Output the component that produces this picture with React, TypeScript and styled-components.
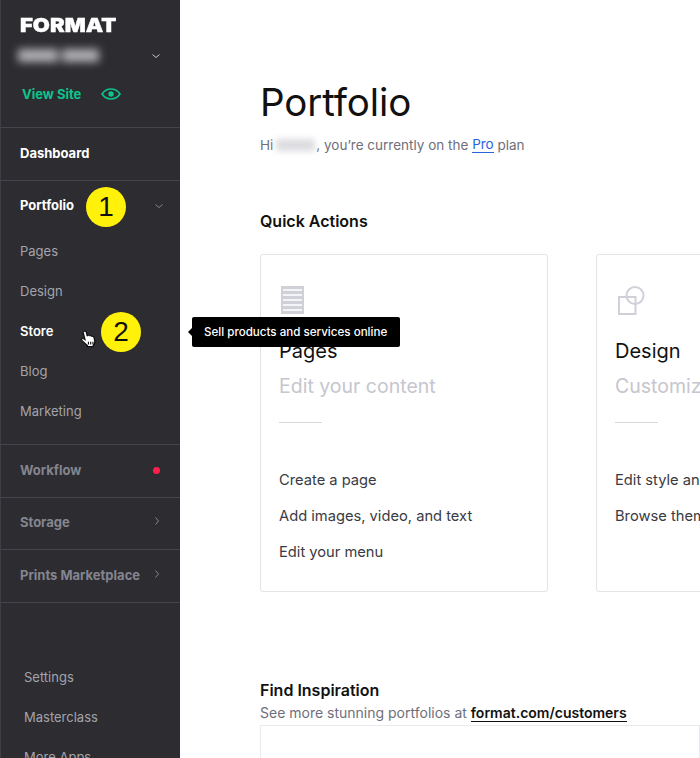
import styled, { createGlobalStyle } from 'styled-components'

const GlobalStyle = createGlobalStyle`
  html, body {
    margin: 0;
    padding: 0;
    height: 100%;
    overflow: hidden;
    background: #fff;
    font-family: Inter, "Liberation Sans", sans-serif;
  }
  * { box-sizing: border-box; }
`

const Page = styled.div`
  position: relative;
  display: flex;
  width: 700px;
  height: 758px;
  overflow: hidden;
`

const Sidebar = styled.aside`
  flex: 0 0 180px;
  height: 758px;
  overflow: hidden;
  background: #2c2c31;
  border-left: 1px solid #3f3f45;
`

const Header = styled.div`
  height: 127px;
  padding: 15px 0 0 19px;
`

const Logo = styled.div`
  font-weight: 900;
  font-size: 19px;
  line-height: 21px;
  color: #fff;
  -webkit-text-stroke: 0.4px #fff;
  transform-origin: left center;
  transform: scaleX(1.16);
`

const AccountRow = styled.div`
  display: flex;
  align-items: center;
  justify-content: space-between;
  height: 22px;
  margin-top: 8px;
  padding-right: 19px;
`

const BlurredName = styled.span`
  display: flex;
  gap: 4px;
  margin-left: -2px;
  filter: blur(4px);
`

const BlurWord = styled.span<{ $width: number }>`
  width: ${p => p.$width}px;
  height: 13px;
  background: #b0b0b4;
`

const ViewSiteRow = styled.div`
  display: flex;
  align-items: center;
  gap: 20px;
  margin: 17px 0 0 2px;
  font-size: 13px;
  font-weight: 700;
  line-height: 22px;
  color: #0cc48c;
`

const Section = styled.div<{ $height: number; $lift?: number }>`
  display: flex;
  align-items: center;
  justify-content: space-between;
  height: ${p => p.$height}px;
  padding: 0 17px ${p => p.$lift ?? 2}px 19px;
  border-top: 1px solid #45454c;
`

const SectionLabel = styled.span<{ $active?: boolean }>`
  font-size: 13px;
  font-weight: 700;
  color: ${p => (p.$active ? '#fff' : '#85858f')};
`

const SubList = styled.div`
  display: flex;
  flex-direction: column;
  padding: 1px 0 13px;
`

const SubItem = styled.div<{ $active?: boolean }>`
  height: 40px;
  padding-left: 19px;
  font-size: 13px;
  line-height: 40px;
  font-weight: ${p => (p.$active ? 600 : 400)};
  color: ${p => (p.$active ? '#fff' : '#a4a4ab')};
`

const FooterList = styled.div`
  display: flex;
  flex-direction: column;
  padding: 54px 0 0 23px;
  border-top: 1px solid #45454c;
`

const FooterItem = styled.div`
  height: 40px;
  font-size: 13px;
  line-height: 40px;
  color: #a4a4ab;
`

const RedDot = styled.span`
  width: 7px;
  height: 7px;
  margin-right: 3px;
  border-radius: 50%;
  background: #ff1f4f;
`

const Main = styled.main`
  flex: 1;
  min-width: 0;
  padding: 78px 0 0 80px;
`

const Title = styled.h1`
  margin: 0;
  font-size: 38.5px;
  font-weight: 400;
  line-height: 48px;
  letter-spacing: -0.1px;
  color: #111;
`

const Greeting = styled.p`
  display: flex;
  align-items: center;
  margin: 9px 0 0;
  font-size: 13.5px;
  line-height: 20px;
  color: #6f6f7b;
  white-space: pre;
`

const GreetingBlur = styled.span`
  width: 39px;
  height: 12px;
  margin: 0 1px 0 3px;
  background: #dcdce0;
  filter: blur(3px);
`

const ProLink = styled.a`
  color: #2a62e0;
  border-bottom: 1px solid #2a62e0;
  line-height: 15px;
`

const SectionTitle = styled.h2<{ $top: number }>`
  margin: ${p => p.$top}px 0 0;
  font-size: 16px;
  font-weight: 600;
  line-height: 22px;
  color: #111;
`

const Cards = styled.div`
  display: flex;
  gap: 48px;
  margin-top: 22px;
`

const Card = styled.section`
  flex: 0 0 288px;
  height: 338px;
  padding: 31px 18px 0;
  border: 1px solid #e4e4e8;
  border-radius: 3px;
  white-space: nowrap;
`

const CardIcon = styled.div<{ $inset: number }>`
  height: 30px;
  padding-left: ${p => p.$inset}px;
`

const CardTitle = styled.h3`
  margin: 20px 0 0;
  font-size: 20px;
  font-weight: 400;
  line-height: 30px;
  color: #111;
`

const CardSub = styled.p`
  margin: 5px 0 0;
  font-size: 19.5px;
  line-height: 30px;
  color: #c6c6ce;
`

const CardRule = styled.div`
  width: 43px;
  height: 1px;
  margin: 21px 0 39px;
  background: #d8d8dd;
`

const CardLink = styled.div`
  height: 36px;
  font-size: 14.7px;
  line-height: 36px;
  color: #3a3a42;
`

const Caption = styled.p`
  margin: 2px 0 0;
  font-size: 14px;
  line-height: 20px;
  color: #6f6f7b;
`

const CaptionLink = styled.a`
  font-weight: 600;
  color: #111;
  border-bottom: 1px solid #111;
`

const Gallery = styled.div`
  height: 200px;
  margin-top: 2px;
  border: 1px solid #eaeaee;
`

const Marker = styled.div<{ $x: number; $y: number }>`
  position: absolute;
  left: ${p => p.$x}px;
  top: ${p => p.$y}px;
  display: flex;
  align-items: center;
  justify-content: center;
  width: 40px;
  height: 40px;
  border-radius: 50%;
  background: #fff10a;
  font-family: "Liberation Sans", Arial, sans-serif;
  font-size: 28px;
  color: #111;
`

const Tooltip = styled.div`
  position: absolute;
  left: 192px;
  top: 317px;
  width: 208px;
  height: 30px;
  padding-left: 12px;
  border-radius: 2px;
  background: #000;
  color: #fff;
  font-size: 11.6px;
  font-weight: 500;
  line-height: 30px;
  white-space: nowrap;

  &::before {
    content: '';
    position: absolute;
    left: -4px;
    top: 11px;
    border-style: solid;
    border-width: 4px 4px 4px 0;
    border-color: transparent #000 transparent transparent;
  }
`

const CursorSvg = styled.svg`
  position: absolute;
  left: 80px;
  top: 330px;
`

const ChevronSvg = styled.svg<{ $shift: number }>`
  margin: 0 ${p => -p.$shift}px 0 ${p => p.$shift}px;
`

const Chevron = ({ dir, color, shift = 0 }: { dir: 'down' | 'right'; color: string; shift?: number }) => (
  <ChevronSvg $shift={shift} width="10" height="10" viewBox="0 0 10 10" fill="none">
    <path
      d={dir === 'down' ? 'M1.500 4.500 5 7.500l3.500-3' : 'M3.500 .5 6.500 4l-3 3.500'}
      stroke={color}
      strokeWidth="1"
    />
  </ChevronSvg>
)

const EyeIcon = () => (
  <svg width="20" height="14" viewBox="0 0 20 14" fill="none">
    <path d="M1 7c2.400-3.400 5.400-5 9-5s6.600 1.600 9 5c-2.400 3.400-5.400 5-9 5s-6.600-1.600-9-5Z" stroke="#0cc48c" strokeWidth="1.700" />
    <circle cx="10" cy="7" r="2.700" fill="#0cc48c" />
  </svg>
)

const PagesIcon = () => (
  <svg width="23" height="28" viewBox="0 0 23 28">
    <rect x="0" y="0" width="23" height="28" fill="#d0d0d8" />
    {[3, 8, 13, 18, 23].map(y => (
      <rect key={y} x="2" y={y} width="19" height="2" fill="#f4f4f6" />
    ))}
  </svg>
)

const DesignIcon = () => (
  <svg width="27" height="29" viewBox="0 0 27 29" fill="none" stroke="#d0d0d8" strokeWidth="2">
    <rect x="1" y="11" width="16.500" height="17" />
    <circle cx="17" cy="9.500" r="8.500" />
  </svg>
)

const HandCursor = () => (
  <CursorSvg width="18" height="18" viewBox="0 0 16 20" preserveAspectRatio="none">
    <path
      d="M3.500 1.500c.8-.6 1.900-.2 2.100.8l.9 4.600.3-1c.9-.5 1.700-.2 2 .6.800-.4 1.600-.1 1.900.6.800-.2 1.500.2 1.700.9l.8 4.500c.2 1.800-.4 3.200-1.400 4.500v1.500H6.500v-1.500C5 15.500 3.200 13.500 1.600 11.400c-.7-1-.2-1.900.7-1.900.7 0 1.400.6 2.100 1.200L2.900 3.200c-.1-.7.100-1.300.6-1.700Z"
      fill="#fff"
      stroke="#111"
      strokeWidth="1.200"
    />
    <path d="M7.500 13v3M9.500 13v3M11.500 13v3" stroke="#111" strokeWidth="1" />
  </CursorSvg>
)

const App = () => (
  <Page>
    <GlobalStyle />
    <Sidebar>
      <Header>
        <Logo>FORMAT</Logo>
        <AccountRow>
          <BlurredName>
            <BlurWord $width={40} />
            <BlurWord $width={37} />
          </BlurredName>
          <Chevron dir="down" color="#c8c8cc" />
        </AccountRow>
        <ViewSiteRow>
          View Site
          <EyeIcon />
        </ViewSiteRow>
      </Header>
      <Section $height={53}>
        <SectionLabel $active>Dashboard</SectionLabel>
      </Section>
      <Section $height={50}>
        <SectionLabel $active>Portfolio</SectionLabel>
        <Chevron dir="down" color="#85858f" shift={1} />
      </Section>
      <SubList>
        <SubItem>Pages</SubItem>
        <SubItem>Design</SubItem>
        <SubItem $active>Store</SubItem>
        <SubItem>Blog</SubItem>
        <SubItem>Marketing</SubItem>
      </SubList>
      <Section $height={53}>
        <SectionLabel>Workflow</SectionLabel>
        <RedDot />
      </Section>
      <Section $height={52} $lift={4}>
        <SectionLabel>Storage</SectionLabel>
        <Chevron dir="right" color="#85858f" shift={-1} />
      </Section>
      <Section $height={53}>
        <SectionLabel>Prints Marketplace</SectionLabel>
        <Chevron dir="right" color="#85858f" shift={-1} />
      </Section>
      <FooterList>
        <FooterItem>Settings</FooterItem>
        <FooterItem>Masterclass</FooterItem>
        <FooterItem>More Apps</FooterItem>
      </FooterList>
    </Sidebar>
    <Main>
      <Title>Portfolio</Title>
      <Greeting>
        Hi
        <GreetingBlur />
        , you’re currently on the <ProLink>Pro</ProLink> plan
      </Greeting>
      <SectionTitle $top={55}>Quick Actions</SectionTitle>
      <Cards>
        <Card>
          <CardIcon $inset={2}>
            <PagesIcon />
          </CardIcon>
          <CardTitle>Pages</CardTitle>
          <CardSub>Edit your content</CardSub>
          <CardRule />
          <CardLink>Create a page</CardLink>
          <CardLink>Add images, video, and text</CardLink>
          <CardLink>Edit your menu</CardLink>
        </Card>
        <Card>
          <CardIcon $inset={3}>
            <DesignIcon />
          </CardIcon>
          <CardTitle>Design</CardTitle>
          <CardSub>Customize your site</CardSub>
          <CardRule />
          <CardLink>Edit style and layout</CardLink>
          <CardLink>Browse themes</CardLink>
        </Card>
      </Cards>
      <SectionTitle $top={87}>Find Inspiration</SectionTitle>
      <Caption>
        See more stunning portfolios at <CaptionLink>format.com/customers</CaptionLink>
      </Caption>
      <Gallery />
    </Main>
    <Marker $x={86} $y={187}>1</Marker>
    <Marker $x={101} $y={312}>2</Marker>
    <HandCursor />
    <Tooltip>Sell products and services online</Tooltip>
  </Page>
)

export default App
